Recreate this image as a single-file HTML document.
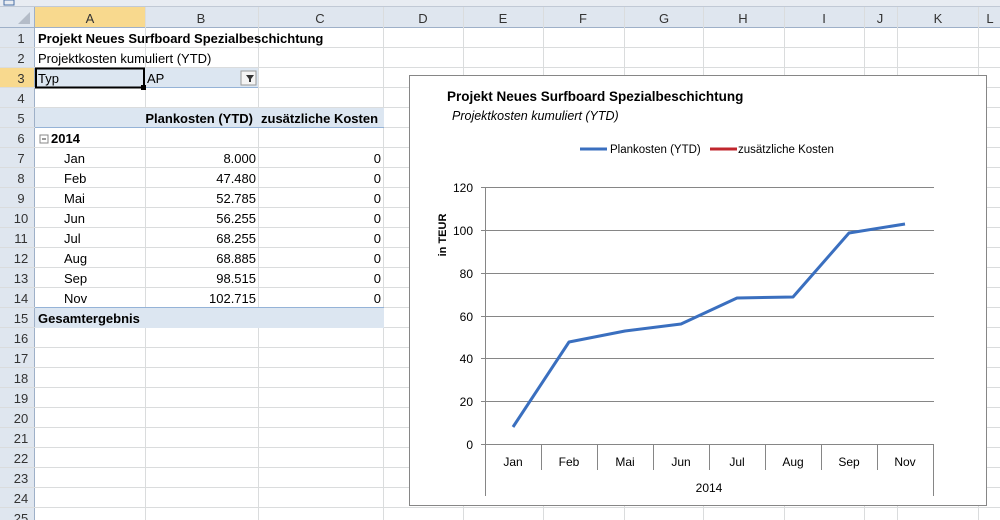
<!DOCTYPE html>
<html><head><meta charset="utf-8"><style>
html,body{margin:0;padding:0;width:1000px;height:520px;overflow:hidden;background:#fff}
svg{display:block;font-family:"Liberation Sans",sans-serif}
</style></head><body>
<svg width="1000" height="520" viewBox="0 0 1000 520">
<rect x="0" y="0" width="1000" height="7" fill="#e8ecf2"/>
<rect x="4" y="0" width="10" height="5" fill="none" stroke="#4a6fa5"/>
<line x1="0" y1="7" x2="1000" y2="7" stroke="#9aa6b8"/>
<!-- column header -->
<rect x="0" y="7" width="1000" height="21" fill="#dfe6ef"/>
<rect x="35" y="7" width="110" height="21" fill="#f8d98e"/>
<rect x="0" y="28" width="35" height="492" fill="#dfe6ef"/>
<rect x="0" y="68" width="35" height="20" fill="#f8d98e"/>
<polygon points="30,12 30,24 18,24" fill="#b4bcc8"/>
<g stroke="#d4d8de">
<line x1="0" y1="27.5" x2="1000" y2="27.5" stroke="#9eb0c8"/>
<line x1="34.5" y1="7" x2="34.5" y2="520" stroke="#9eb0c8"/>
</g>
<!-- grid -->
<g stroke="#dadcdd" stroke-width="1">
<line x1="145.5" y1="7" x2="145.5" y2="520"/><line x1="258.5" y1="7" x2="258.5" y2="520"/>
<line x1="383.5" y1="7" x2="383.5" y2="520"/><line x1="463.5" y1="7" x2="463.5" y2="520"/>
<line x1="543.5" y1="7" x2="543.5" y2="520"/><line x1="624.5" y1="7" x2="624.5" y2="520"/>
<line x1="703.5" y1="7" x2="703.5" y2="520"/><line x1="784.5" y1="7" x2="784.5" y2="520"/>
<line x1="864.5" y1="7" x2="864.5" y2="520"/><line x1="897.5" y1="7" x2="897.5" y2="520"/>
<line x1="978.5" y1="7" x2="978.5" y2="520"/>
</g>
<g stroke="#dadcdd" id="rows">
<line x1="0" y1="47.5" x2="1000" y2="47.5"/><line x1="0" y1="67.5" x2="1000" y2="67.5"/>
<line x1="0" y1="87.5" x2="1000" y2="87.5"/><line x1="0" y1="107.5" x2="1000" y2="107.5"/>
<line x1="0" y1="127.5" x2="1000" y2="127.5"/><line x1="0" y1="147.5" x2="1000" y2="147.5"/>
<line x1="0" y1="167.5" x2="1000" y2="167.5"/><line x1="0" y1="187.5" x2="1000" y2="187.5"/>
<line x1="0" y1="207.5" x2="1000" y2="207.5"/><line x1="0" y1="227.5" x2="1000" y2="227.5"/>
<line x1="0" y1="247.5" x2="1000" y2="247.5"/><line x1="0" y1="267.5" x2="1000" y2="267.5"/>
<line x1="0" y1="287.5" x2="1000" y2="287.5"/><line x1="0" y1="307.5" x2="1000" y2="307.5"/>
<line x1="0" y1="327.5" x2="1000" y2="327.5"/><line x1="0" y1="347.5" x2="1000" y2="347.5"/>
<line x1="0" y1="367.5" x2="1000" y2="367.5"/><line x1="0" y1="387.5" x2="1000" y2="387.5"/>
<line x1="0" y1="407.5" x2="1000" y2="407.5"/><line x1="0" y1="427.5" x2="1000" y2="427.5"/>
<line x1="0" y1="447.5" x2="1000" y2="447.5"/><line x1="0" y1="467.5" x2="1000" y2="467.5"/>
<line x1="0" y1="487.5" x2="1000" y2="487.5"/><line x1="0" y1="507.5" x2="1000" y2="507.5"/>
</g>
<!-- pivot fills -->
<rect x="35" y="48" width="224" height="0" fill="none"/>
<rect x="35" y="68" width="223" height="20" fill="#dce6f1"/>
<rect x="35" y="108" width="349" height="20" fill="#dce6f1"/>
<rect x="35" y="308" width="349" height="20" fill="#dce6f1"/>
<line x1="35" y1="127.5" x2="384" y2="127.5" stroke="#95b3d7"/>
<line x1="35" y1="307.5" x2="384" y2="307.5" stroke="#95b3d7"/>
<line x1="35" y1="87.5" x2="258" y2="87.5" stroke="#95b3d7"/>
<rect x="36" y="68.5" width="108" height="19" fill="none" stroke="#000" stroke-width="2"/>
<rect x="141" y="85" width="5" height="5" fill="#000"/>
<rect x="241" y="71" width="15" height="14" fill="#f4f4f4" stroke="#999"/>
<path d="M246 75h8l-3 4v3h-2v-3z" fill="#333"/>
<!-- header labels -->
<g font-size="13" fill="#333" text-anchor="middle">
<text x="90" y="23">A</text><text x="201" y="23">B</text><text x="320" y="23">C</text>
<text x="423" y="23">D</text><text x="503" y="23">E</text><text x="583" y="23">F</text>
<text x="664" y="23">G</text><text x="743" y="23">H</text><text x="824" y="23">I</text>
<text x="880" y="23">J</text><text x="938" y="23">K</text><text x="990" y="23">L</text>
</g>
<g font-size="13" fill="#333" text-anchor="middle">
<text x="21" y="43">1</text><text x="21" y="63">2</text><text x="21" y="83">3</text>
<text x="21" y="103">4</text><text x="21" y="123">5</text><text x="21" y="143">6</text>
<text x="21" y="163">7</text><text x="21" y="183">8</text><text x="21" y="203">9</text>
<text x="21" y="223">10</text><text x="21" y="243">11</text><text x="21" y="263">12</text>
<text x="21" y="283">13</text><text x="21" y="303">14</text><text x="21" y="323">15</text>
<text x="21" y="343">16</text><text x="21" y="363">17</text><text x="21" y="383">18</text>
<text x="21" y="403">19</text><text x="21" y="423">20</text><text x="21" y="443">21</text>
<text x="21" y="463">22</text><text x="21" y="483">23</text><text x="21" y="503">24</text>
<text x="21" y="523">25</text>
</g>
<!-- cells -->
<g font-size="13" fill="#000">
<text x="38" y="43" font-weight="bold">Projekt Neues Surfboard Spezialbeschichtung</text>
<text x="38" y="63">Projektkosten kumuliert (YTD)</text>
<text x="38" y="83">Typ</text><text x="147" y="83">AP</text>
<text x="253" y="123" font-weight="bold" text-anchor="end">Plankosten (YTD)</text>
<text x="261" y="123" font-weight="bold">zusätzliche Kosten</text>
<rect x="40" y="135" width="8" height="8" fill="#fff" stroke="#888"/><line x1="42" y1="139" x2="46" y2="139" stroke="#333"/>
<text x="51" y="143" font-weight="bold">2014</text>
<text x="38" y="323" font-weight="bold">Gesamtergebnis</text>
</g>
<g font-size="13" fill="#000">
<text x="64" y="163">Jan</text><text x="64" y="183">Feb</text><text x="64" y="203">Mai</text><text x="64" y="223">Jun</text>
<text x="64" y="243">Jul</text><text x="64" y="263">Aug</text><text x="64" y="283">Sep</text><text x="64" y="303">Nov</text>
</g>
<g font-size="13" fill="#000" text-anchor="end">
<text x="256" y="163">8.000</text><text x="256" y="183">47.480</text><text x="256" y="203">52.785</text><text x="256" y="223">56.255</text>
<text x="256" y="243">68.255</text><text x="256" y="263">68.885</text><text x="256" y="283">98.515</text><text x="256" y="303">102.715</text>
<text x="381" y="163">0</text><text x="381" y="183">0</text><text x="381" y="203">0</text><text x="381" y="223">0</text>
<text x="381" y="243">0</text><text x="381" y="263">0</text><text x="381" y="283">0</text><text x="381" y="303">0</text>
</g>
<!-- chart -->
<rect x="409.5" y="75.5" width="577" height="430" fill="#fff" stroke="#868686"/>
<text x="447" y="101" font-size="13.5" font-weight="bold" fill="#000">Projekt Neues Surfboard Spezialbeschichtung</text>
<text x="452" y="120" font-size="12.5" font-style="italic" fill="#000">Projektkosten kumuliert (YTD)</text>
<line x1="580" y1="149" x2="607" y2="149" stroke="#3a6fbf" stroke-width="3"/>
<text x="610" y="153" font-size="11.5" fill="#000">Plankosten (YTD)</text>
<line x1="710" y1="149" x2="737" y2="149" stroke="#c0262d" stroke-width="3"/>
<text x="738" y="153" font-size="11.5" fill="#000">zusätzliche Kosten</text>
<g stroke="#868686">
<line x1="481" y1="187.5" x2="934" y2="187.5"/><line x1="481" y1="230.5" x2="934" y2="230.5"/>
<line x1="481" y1="273.5" x2="934" y2="273.5"/><line x1="481" y1="316.5" x2="934" y2="316.5"/>
<line x1="481" y1="358.5" x2="934" y2="358.5"/><line x1="481" y1="401.5" x2="934" y2="401.5"/>
<line x1="481" y1="444.5" x2="934" y2="444.5"/>
<line x1="485.5" y1="187" x2="485.5" y2="496"/>
<line x1="933.5" y1="444" x2="933.5" y2="496"/>
<line x1="541.5" y1="444" x2="541.5" y2="470"/><line x1="597.5" y1="444" x2="597.5" y2="470"/>
<line x1="653.5" y1="444" x2="653.5" y2="470"/><line x1="709.5" y1="444" x2="709.5" y2="470"/>
<line x1="765.5" y1="444" x2="765.5" y2="470"/><line x1="821.5" y1="444" x2="821.5" y2="470"/>
<line x1="877.5" y1="444" x2="877.5" y2="470"/>
</g>
<g font-size="12" fill="#000" text-anchor="end">
<text x="473" y="192">120</text><text x="473" y="235">100</text><text x="473" y="278">80</text>
<text x="473" y="321">60</text><text x="473" y="363">40</text><text x="473" y="406">20</text><text x="473" y="449">0</text>
</g>
<text transform="translate(446,235) rotate(-90)" font-size="11" font-weight="bold" text-anchor="middle">in TEUR</text>
<g font-size="12" fill="#000" text-anchor="middle">
<text x="513" y="466">Jan</text><text x="569" y="466">Feb</text><text x="625" y="466">Mai</text><text x="681" y="466">Jun</text>
<text x="737" y="466">Jul</text><text x="793" y="466">Aug</text><text x="849" y="466">Sep</text><text x="905" y="466">Nov</text>
<text x="709" y="492">2014</text>
</g>
<polyline fill="none" stroke="#3a6fbf" stroke-width="3" stroke-linejoin="round" points="513,427 569,342 625,331 681,324 737,298 793,297 849,233 905,224"/>
</svg>
</body></html>
